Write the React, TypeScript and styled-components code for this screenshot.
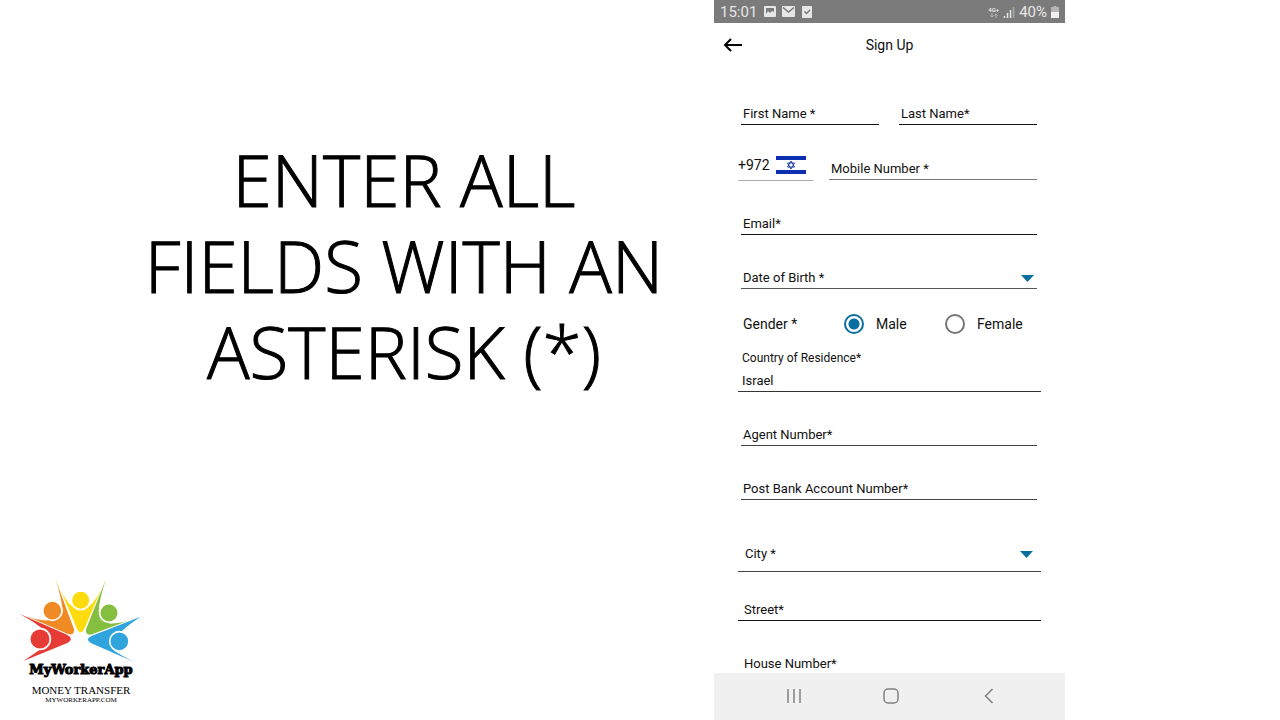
import React, { useState } from "react";
import styled, { createGlobalStyle } from "styled-components";

const ink = "#111";
const accent = "#0a6ea0";

const GlobalStyle = createGlobalStyle`
  * { box-sizing: border-box; }
  body { margin: 0; background: #fff; color: ${ink}; font-family: Roboto, "Liberation Sans", sans-serif; }
  button, input, select { font: inherit; color: inherit; background: none; border: 0; padding: 0; margin: 0; border-radius: 0; outline: none; }
`;

const Slide = styled.main`
  display: grid;
  grid-template-columns: 714fr 351fr 215fr;
  height: 100vh;
`;

const Intro = styled.section`
  display: flex;
  flex-direction: column;
  justify-content: space-between;
  padding: 137px 0 16px 18px;
`;

const Headline = styled.h1`
  margin: 0;
  padding-left: 76px;
  font: 300 71px/86px "Open Sans", sans-serif;
  color: #000;
  text-align: center;
  -webkit-text-stroke: 1px #000;
`;

const Line = styled.span`
  display: block;
`;

const Brand = styled.div`
  display: flex;
  flex-direction: column;
  align-items: center;
  align-self: flex-start;
  color: #000;
`;

const BrandArt = styled.svg`
  display: block;
  width: 126px;
  height: 84px;
`;

const BrandName = styled.strong`
  font: 700 13px/16px "DejaVu Serif", serif;
  -webkit-text-stroke: 1px #000;
`;

const BrandTag = styled.span`
  margin-top: 6px;
  font: 400 11px/12px "Liberation Serif", serif;
`;

const BrandUrl = styled.span`
  font: 400 7px/8px "Liberation Serif", serif;
`;

const Phone = styled.section`
  display: flex;
  flex-direction: column;
  min-width: 0;
  min-height: 0;
`;

const StatusBar = styled.div`
  display: flex;
  align-items: center;
  justify-content: space-between;
  flex: none;
  height: 23px;
  padding: 0 6px;
  background: #7b7b7b;
  color: #e6e6e6;
  font-size: 15px;
`;

const StatusGroup = styled.div<{ $gap: number }>`
  display: flex;
  align-items: center;
  gap: ${(p) => p.$gap}px;
`;

const Icon = styled.svg`
  display: block;
  flex: none;
`;

const Network = styled.span`
  display: flex;
  flex-direction: column;
  align-items: center;
  font: 700 6px/7px Roboto, sans-serif;
`;

const TitleBar = styled.header`
  display: grid;
  grid-template-columns: 20px 1fr 20px;
  align-items: center;
  flex: none;
  height: 44px;
  padding: 0 9px;
`;

const BackButton = styled.button`
  cursor: pointer;
`;

const Title = styled.h2`
  margin: 0;
  font-size: 14px;
  line-height: 18px;
  font-weight: 400;
  text-align: center;
`;

const Form = styled.form`
  flex: 1;
  min-height: 0;
  overflow: hidden;
  padding: 32px 24px 0;
`;

const Stack = styled.div<{ $top?: number; $inset?: string }>`
  display: flex;
  flex-direction: column;
  gap: 28px;
  margin-top: ${(p) => p.$top ?? 0}px;
  padding: ${(p) => p.$inset ?? "0"};
`;

const Row = styled.div<{ $columns: string; $gap: number }>`
  display: grid;
  grid-template-columns: ${(p) => p.$columns};
  gap: ${(p) => p.$gap}px;
`;

const MobileRow = styled(Row)`
  padding-right: 4px;
`;

const Field = styled.div<{ $height?: number; $line?: string; $pad?: number; $bottom?: number }>`
  display: flex;
  align-items: flex-end;
  min-width: 0;
  height: ${(p) => p.$height ?? 26}px;
  padding: 0 ${(p) => p.$pad ?? 2}px ${(p) => p.$bottom ?? 2}px;
  border-bottom: 1px solid ${(p) => p.$line ?? "#111"};
  font-size: 13px;
  line-height: 16px;
`;

const Label = styled.label`
  flex: none;
`;

const TextInput = styled.input`
  flex: 1;
  min-width: 0;
  height: 16px;
`;

const Picker = styled.select`
  flex: 1;
  min-width: 0;
  height: 16px;
  appearance: none;
`;

const CodeButton = styled.button`
  display: flex;
  align-items: center;
  justify-content: space-between;
  height: 28px;
  padding: 0 7px 3px 0;
  border-bottom: 1px solid #aaa;
  font-size: 14px;
  line-height: 16px;
`;

const Gender = styled.div`
  display: grid;
  grid-template-columns: 101px 101px 1fr;
  align-items: center;
  height: 26px;
  margin-top: 22px;
  padding-left: 5px;
  font-size: 14px;
`;

const Choice = styled.label`
  display: flex;
  align-items: center;
  gap: 12px;
`;

const Radio = styled.input`
  && {
    appearance: none;
    flex: none;
    width: 20px;
    height: 20px;
    border: 2px solid #757575;
    border-radius: 50%;
  }
  &&:checked {
    border-color: ${accent};
    background: radial-gradient(circle, ${accent} 5px, transparent 6px);
  }
`;

const Residence = styled.div`
  margin-top: 13px;
`;

const SmallLabel = styled.label`
  display: block;
  padding-left: 4px;
  font-size: 12px;
  line-height: 16px;
`;

const NavBar = styled.nav`
  display: grid;
  grid-template-columns: repeat(3, 28%);
  justify-content: center;
  flex: none;
  height: 47px;
  padding: 0 0 2px 3px;
  background: #f0f0f0;
`;

const NavButton = styled.button`
  display: grid;
  place-items: center;
  cursor: pointer;
`;

const Caret = () => (
  <Icon width="16" height="16" viewBox="0 0 16 16" aria-hidden="true">
    <path d="M2 5h13l-6.500 7z" fill={accent} />
  </Icon>
);

const figures = [
  { color: "#e63c35", x: 90, y: 207, r: 29, body: "M28 131L168 193Q196 207 170 220L40 273Q85 243 100 232L95 174Q65 150 28 131z" },
  { color: "#f08a24", x: 127, y: 122, r: 27, body: "M30 130Q85 156 120 150L158 128Q156 85 136 26L192 178Q194 198 174 192z" },
  { color: "#fedb0c", x: 212, y: 91, r: 26, body: "M137 25Q160 90 190 112L234 112Q264 90 288 25L223 176Q212 198 201 176z" },
  { color: "#85bf3f", x: 297, y: 129, r: 26, body: "M288 27Q268 85 266 125L300 161Q345 160 390 139L246 193Q226 198 228 178z" },
  { color: "#30a4dd", x: 328, y: 214, r: 27, body: "M392 140Q350 168 335 184L310 240Q335 258 375 277L244 220Q222 208 246 197z" },
];

const Logo = () => (
  <BrandArt viewBox="24 24 378 252" aria-hidden="true">
    {figures.map((f) => (
      <g key={f.color} fill={f.color}>
        <path d={f.body} />
        <circle cx={f.x} cy={f.y} r={f.r + 2} stroke="#fff" strokeWidth="5" />
      </g>
    ))}
  </BrandArt>
);

const StatusIcons = () => (
  <Icon width="50" height="14" viewBox="0 0 50 14" aria-hidden="true">
    <rect x="1" y="1" width="12" height="11" rx="1" fill="#e6e6e6" />
    <path d="M3 9V3h8v4l-2-1-2 2-2-2z" fill="#7b7b7b" />
    <rect x="19" y="1" width="13" height="11" rx="1" fill="#e6e6e6" />
    <path d="M20 2.500l5.500 4.500 5.500-4.500" fill="none" stroke="#7b7b7b" strokeWidth="1.500" />
    <rect x="39" y="1" width="10" height="12" rx="1" fill="#e6e6e6" />
    <path d="M41.500 6.500l2 2 3.500-3.500" fill="none" stroke="#7b7b7b" strokeWidth="1.500" />
  </Icon>
);

export default function App() {
  const [gender, setGender] = useState("male");
  const [country, setCountry] = useState("Israel");

  return (
    <>
      <GlobalStyle />
      <Slide>
        <Intro>
          <Headline>
            <Line>ENTER ALL </Line>
            <Line>FIELDS WITH AN </Line>
            <Line>ASTERISK (*)</Line>
          </Headline>
          <Brand>
            <Logo />
            <BrandName>MyWorkerApp</BrandName>
            <BrandTag>MONEY TRANSFER</BrandTag>
            <BrandUrl>MYWORKERAPP.COM</BrandUrl>
          </Brand>
        </Intro>

        <Phone>
          <StatusBar>
            <StatusGroup $gap={6}>
              <span>15:01</span>
              <StatusIcons />
            </StatusGroup>
            <StatusGroup $gap={4}>
              <Network>
                4G+
                <Icon width="8" height="5" viewBox="0 0 8 5" aria-hidden="true">
                  <path d="M2 0v4M.5 2.500L2 4l1.500-1.500M6 5V1M4.500 2.500L6 1l1.500 1.500" fill="none" stroke="#b8b8b8" />
                </Icon>
              </Network>
              <Icon width="12" height="12" viewBox="0 0 12 12" aria-hidden="true">
                <path d="M1.500 10v2M4.500 7v5M7.500 4v8" stroke="#e6e6e6" strokeWidth="1.500" />
                <path d="M10.500 1v11" stroke="#aaa" strokeWidth="1.500" />
              </Icon>
              <span>40%</span>
              <Icon width="8" height="12" viewBox="0 0 8 12" aria-hidden="true">
                <path d="M2.500 0h3v1H8v6H0V1h2.500z" fill="#b4b4b4" />
                <path d="M0 6h8v6H0z" fill="#f0f0f0" />
              </Icon>
            </StatusGroup>
          </StatusBar>

          <TitleBar>
            <BackButton type="button" aria-label="Back">
              <Icon width="20" height="14" viewBox="0 0 20 14" aria-hidden="true">
                <path d="M19 7H2M8 1L2 7l6 6" fill="none" stroke="#000" strokeWidth="2" />
              </Icon>
            </BackButton>
            <Title>Sign Up</Title>
          </TitleBar>

          <Form>
            <Stack>
              <Stack $inset="0 4px 0 3px">
                <Row $columns="minmax(0, 1fr) minmax(0, 1fr)" $gap={20}>
                  <Field>
                    <Label htmlFor="first">First Name *</Label>
                    <TextInput id="first" />
                  </Field>
                  <Field>
                    <Label htmlFor="last">Last Name*</Label>
                    <TextInput id="last" />
                  </Field>
                </Row>
              </Stack>
              <MobileRow $columns="75px minmax(0, 1fr)" $gap={16}>
                <CodeButton type="button">
                  +972
                  <Icon width="30" height="20" viewBox="0 0 30 20" aria-hidden="true">
                    <path d="M0 1h30v4H0zM0 15h30v4H0z" fill="#0b2fb0" />
                    <path d="M15 6l3.500 6h-7zM15 14l-3.500-6h7z" fill="none" stroke="#1d3f9e" />
                  </Icon>
                </CodeButton>
                <Field $height={27} $line="#777">
                  <Label htmlFor="mobile">Mobile Number *</Label>
                  <TextInput id="mobile" type="tel" />
                </Field>
              </MobileRow>
              <Stack $inset="0 4px 0 3px">
                <Field>
                  <Label htmlFor="email">Email*</Label>
                  <TextInput id="email" type="email" />
                </Field>
                <Field $line="#555">
                  <Label htmlFor="birth">Date of Birth *</Label>
                  <Picker id="birth" />
                  <Caret />
                </Field>
              </Stack>
            </Stack>

            <Gender role="radiogroup" aria-labelledby="gender">
              <span id="gender">Gender *</span>
              <Choice>
                <Radio type="radio" name="gender" checked={gender === "male"} onChange={() => setGender("male")} />
                Male
              </Choice>
              <Choice>
                <Radio type="radio" name="gender" checked={gender === "female"} onChange={() => setGender("female")} />
                Female
              </Choice>
            </Gender>

            <Residence>
              <SmallLabel htmlFor="country">Country of Residence*</SmallLabel>
              <Field $pad={4} $line="#333">
                <TextInput id="country" value={country} onChange={(e) => setCountry(e.target.value)} />
              </Field>
            </Residence>

            <Stack $top={28} $inset="0 4px 0 3px">
              <Field $line="#444">
                <Label htmlFor="agent">Agent Number*</Label>
                <TextInput id="agent" />
              </Field>
              <Field $line="#444">
                <Label htmlFor="account">Post Bank Account Number*</Label>
                <TextInput id="account" />
              </Field>
            </Stack>

            <Stack $top={34}>
              <Field $height={38} $pad={7} $bottom={9} $line="#444">
                <Label htmlFor="city">City *</Label>
                <Picker id="city" />
                <Caret />
              </Field>
            </Stack>

            <Stack $top={23}>
              <Field $pad={6}>
                <Label htmlFor="street">Street*</Label>
                <TextInput id="street" />
              </Field>
              <Field $pad={6}>
                <Label htmlFor="house">House Number*</Label>
                <TextInput id="house" />
              </Field>
            </Stack>
          </Form>

          <NavBar aria-label="System">
            <NavButton type="button" aria-label="Recent apps">
              <Icon width="16" height="16" viewBox="0 0 16 16" aria-hidden="true">
                <path d="M2 1v14M8 1v14M14 1v14" stroke="#808080" strokeWidth="1.500" />
              </Icon>
            </NavButton>
            <NavButton type="button" aria-label="Home">
              <Icon width="16" height="16" viewBox="0 0 16 16" aria-hidden="true">
                <rect x="1" y="1" width="14" height="14" rx="4" fill="none" stroke="#808080" strokeWidth="1.500" />
              </Icon>
            </NavButton>
            <NavButton type="button" aria-label="Back">
              <Icon width="16" height="16" viewBox="0 0 16 16" aria-hidden="true">
                <path d="M12.500 1l-7 7 7 7" fill="none" stroke="#808080" strokeWidth="1.500" />
              </Icon>
            </NavButton>
          </NavBar>
        </Phone>
      </Slide>
    </>
  );
}
